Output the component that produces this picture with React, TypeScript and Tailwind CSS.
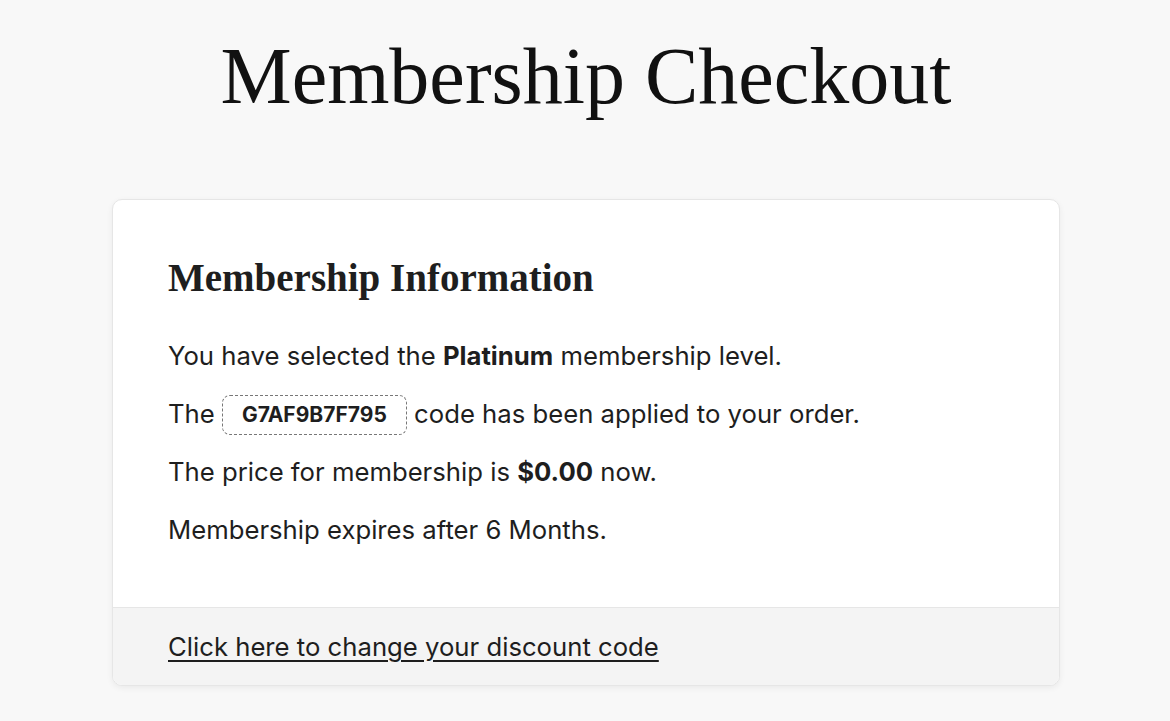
import React from 'react';

const App = () => {
  return (
    <div className="min-h-screen bg-[#f8f8f8] text-[#1e1e1e] pl-[2px]" style={{ fontFamily: 'Inter, "Noto Sans", sans-serif' }}>
      <div className="h-[152px] flex items-center justify-center">
        <h1 className="text-[80px] leading-none text-[#111]" style={{ fontFamily: '"Liberation Serif", "DejaVu Serif", serif' }}>
          Membership Checkout
        </h1>
      </div>

      <div className="mt-[47px] mx-auto w-[948px] bg-white rounded-[10px] border border-[#e6e6e6] shadow-[0_2px_6px_rgba(0,0,0,0.06)] overflow-hidden">
        <div className="px-[55px] pt-[54px] pb-[59px]">
          <h2 className="text-[39px] leading-[48px] font-bold text-[#1e1e1e]" style={{ fontFamily: '"Liberation Serif", "DejaVu Serif", serif' }}>
            Membership Information
          </h2>
          <div className="mt-[36px] text-[25.7px] leading-[36px]">
            <p>
              You have selected the <strong className="font-bold">Platinum</strong> membership level.
            </p>
            <p className="mt-[22px] h-[36px]">
              The{' '}
              <span className="inline-flex items-center h-[40px] px-[19px] align-middle rounded-[8px] border border-dashed border-[#777] text-[21px] font-bold -mt-[2px]">
                G7AF9B7F795
              </span>{' '}
              code has been applied to your order.
            </p>
            <p className="mt-[22px]">
              The price for membership is <strong className="font-bold">$0.00</strong> now.
            </p>
            <p className="mt-[22px]">Membership expires after 6 Months.</p>
          </div>
        </div>
        <div className="h-[78px] bg-[#f4f4f4] border-t border-[#e6e6e6] flex items-center px-[55px] pt-[2px]">
          <a href="#" className="text-[25.7px] underline underline-offset-[4px] text-[#1e1e1e]">
            Click here to change your discount code
          </a>
        </div>
      </div>
    </div>
  );
};

export default App;
